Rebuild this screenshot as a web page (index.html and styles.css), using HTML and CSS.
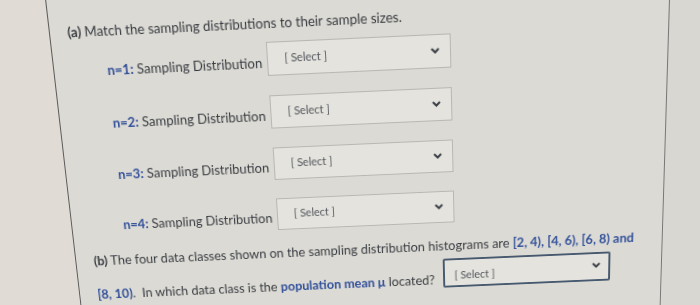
FILE: index.html
```html
<!DOCTYPE html>
<html lang="en">
<head>
    <meta charset="UTF-8">
    <title>Quiz question</title>
    <link rel="stylesheet" href="styles.css">
</head>
<body>
    <div class="photo">
        <div class="screen">
            <div class="margin-left"></div>
            <div class="question">
                <p class="title"><b>(a)</b> Match the sampling distributions to their sample sizes.</p>

                <div class="matches">
                    <div class="match-row">
                        <span class="label"><b class="hl">n=1:</b> Sampling Distribution</span>
                        <div class="select">
                            <span>[ Select ]</span>
                            <svg class="chev" width="9" height="6" viewBox="0 0 9 6"><path d="M1 1l3.5 3.5L8 1" fill="none" stroke="#3a3f46" stroke-width="2"/></svg>
                        </div>
                    </div>
                    <div class="match-row">
                        <span class="label"><b class="hl">n=2:</b> Sampling Distribution</span>
                        <div class="select">
                            <span>[ Select ]</span>
                            <svg class="chev" width="9" height="6" viewBox="0 0 9 6"><path d="M1 1l3.5 3.5L8 1" fill="none" stroke="#3a3f46" stroke-width="2"/></svg>
                        </div>
                    </div>
                    <div class="match-row">
                        <span class="label"><b class="hl">n=3:</b> Sampling Distribution</span>
                        <div class="select">
                            <span>[ Select ]</span>
                            <svg class="chev" width="9" height="6" viewBox="0 0 9 6"><path d="M1 1l3.5 3.5L8 1" fill="none" stroke="#3a3f46" stroke-width="2"/></svg>
                        </div>
                    </div>
                    <div class="match-row">
                        <span class="label"><b class="hl">n=4:</b> Sampling Distribution</span>
                        <div class="select">
                            <span>[ Select ]</span>
                            <svg class="chev" width="9" height="6" viewBox="0 0 9 6"><path d="M1 1l3.5 3.5L8 1" fill="none" stroke="#3a3f46" stroke-width="2"/></svg>
                        </div>
                    </div>
                </div>

                <p class="part-b">
                    <b>(b)</b> The four data classes shown on the sampling distribution histograms are <b class="hl">[2, 4), [4, 6), [6, 8) and</b><br>
                    <b class="hl">[8, 10)</b>.&nbsp; In which data class is the <b class="hl">population mean &mu;</b> located?
                    <span class="select inline">
                        <span>[ Select ]</span>
                        <svg class="chev" width="9" height="6" viewBox="0 0 9 6"><path d="M1 1l3.5 3.5L8 1" fill="none" stroke="#3a3f46" stroke-width="2"/></svg>
                    </span>
                </p>
            </div>
            <div class="margin-right"></div>
        </div>
    </div>
</body>
</html>
```

FILE: styles.css
```css
body {
    margin: 0;
    background-color: #dcd9d2;
    font-family: Lato, 'Liberation Sans', sans-serif;
    color: #383c42;
}
.photo {
    width: 700px;
    height: 305px;
    overflow: hidden;
}

/* the screenshot is a photo taken at an angle, so the whole screen is tilted */
.screen {
    display: flex;
    width: 760px;
    height: 360px;
    margin: -25px 0 0 -30px;
    transform: perspective(600px) rotateX(-8.3deg) rotate(-2.6deg);
    transform-origin: 380px 177px;
}
.margin-left {
    width: 93px;
    background-color: #e0dcd5;
    border-right: 1px solid #5a5a5a;
}
.question {
    width: 583px;
    background-color: #dcdad4;
    padding: 39px 0 0 17px;
}
.margin-right {
    flex: 1;
    background-color: #d9d7d1;
    border-left: 1px solid #777;
}
.title {
    margin: 0;
    font-size: 13px;
    line-height: 16px;
}
.hl {
    color: #31509a;
}
.matches {
    display: flex;
    flex-direction: column;
    gap: 19px;
    margin-top: 10px;
    padding-left: 35px;
}
.match-row {
    display: flex;
    align-items: center;
}
.label {
    font-size: 13px;
    padding-top: 7px;
}
.select {
    display: flex;
    align-items: center;
    justify-content: space-between;
    box-sizing: border-box;
    width: 180px;
    height: 33px;
    margin-left: 5px;
    padding: 0 10px 2px 16px;
    background-color: #e5e3de;
    border: 1px solid #b8b7b3;
    font-size: 11px;
    color: #50555b;
}
.part-b {
    margin: 10px 0 0 1px;
    font-size: 13px;
    line-height: 28px;
}
.select.inline {
    display: inline-flex;
    align-items: flex-start;
    vertical-align: 5px;
    width: 172px;
    height: 31px;
    margin-left: 5px;
    padding: 9px 8px 0 10px;
    border: 2px solid #46596f;
    border-radius: 2px;
    line-height: 13px;
}
```
